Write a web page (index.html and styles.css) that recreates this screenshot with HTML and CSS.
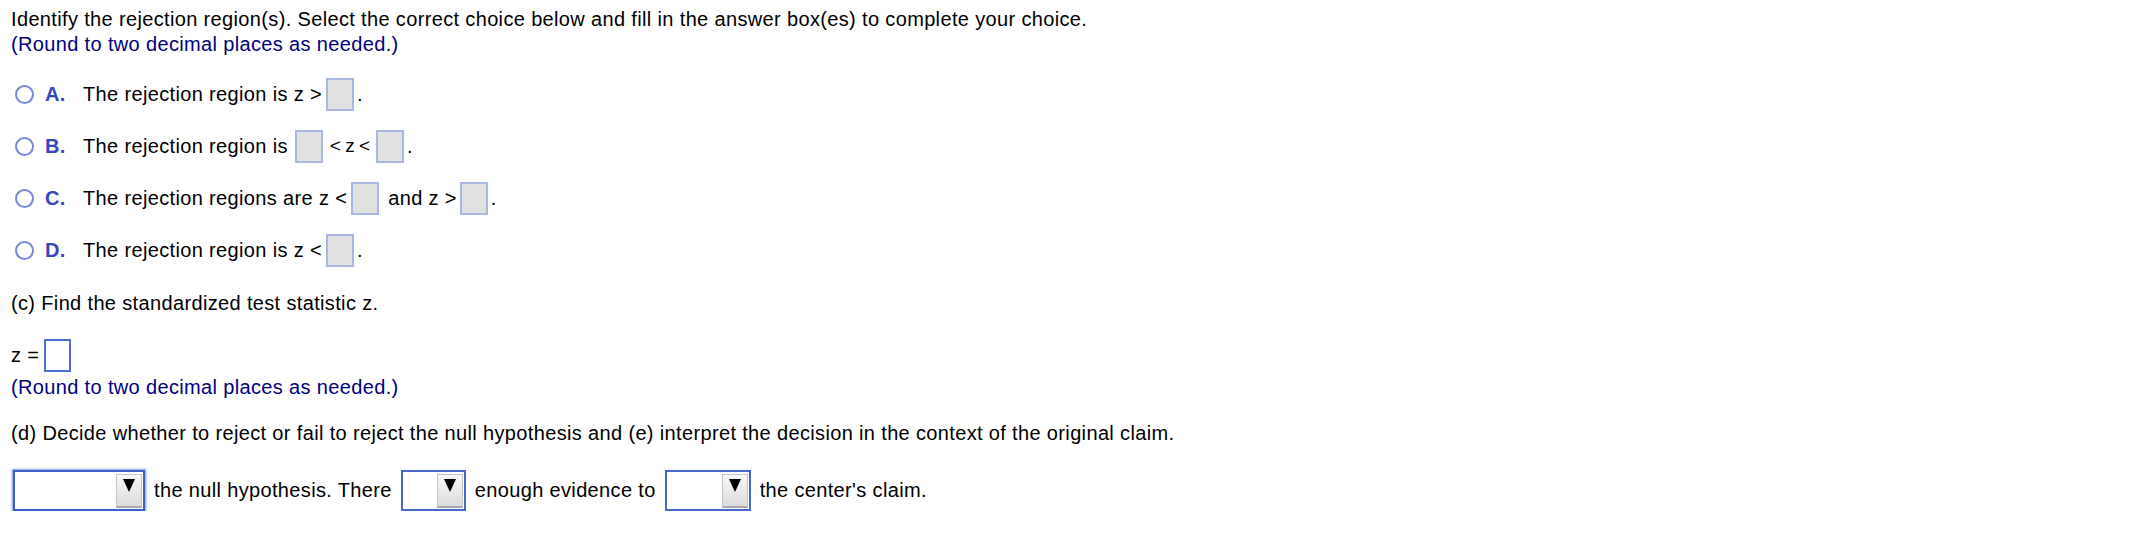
FILE: index.html
```html
<!DOCTYPE html>
<html>
<head>
<meta charset="utf-8">
<link rel="stylesheet" href="styles.css">
</head>
<body>
<div class="page">
  <p class="line">Identify the rejection region(s). Select the correct choice below and fill in the answer box(es) to complete your choice.</p>
  <p class="line hint">(Round to two decimal places as needed.)</p>

  <div class="choices">
    <div class="choice">
      <span class="radio"></span><span class="letter">A.</span>
      <span class="ctext">The rejection region is z &gt;</span><span class="box gap-l"></span><span class="dot">.</span>
    </div>
    <div class="choice">
      <span class="radio"></span><span class="letter">B.</span>
      <span class="ctext">The rejection region is</span><span class="box gap-l2"></span><span class="ineq">&lt; z &lt;</span><span class="box"></span><span class="dot">.</span>
    </div>
    <div class="choice">
      <span class="radio"></span><span class="letter">C.</span>
      <span class="ctext">The rejection regions are z &lt;</span><span class="box gap-l"></span><span class="ctext mid">and z &gt;</span><span class="box gap-m"></span><span class="dot">.</span>
    </div>
    <div class="choice">
      <span class="radio"></span><span class="letter">D.</span>
      <span class="ctext">The rejection region is z &lt;</span><span class="box gap-l"></span><span class="dot">.</span>
    </div>
  </div>

  <p class="line part-c">(c) Find the standardized test statistic z.</p>
  <div class="zrow"><span class="ctext">z =</span><span class="zbox"></span></div>
  <p class="line hint">(Round to two decimal places as needed.)</p>

  <p class="line part-d">(d) Decide whether to reject or fail to reject the null hypothesis and (e) interpret the decision in the context of the original claim.</p>
  <div class="ddrow">
    <span class="dd dd1 focus"><span class="ddbtn"><span class="tri"></span></span></span>
    <span class="ctext">the null hypothesis. There</span>
    <span class="dd dd2"><span class="ddbtn"><span class="tri"></span></span></span>
    <span class="ctext">enough evidence to</span>
    <span class="dd dd3"><span class="ddbtn"><span class="tri"></span></span></span>
    <span class="ctext">the center's claim.</span>
  </div>
</div>
</body>
</html>
```

FILE: styles.css
```css
html, body {
  margin: 0;
  padding: 0;
  background: #ffffff;
}
body {
  font-family: "Liberation Sans", Arial, Helvetica, sans-serif;
  font-size: 20px;
  letter-spacing: 0.35px;
  color: #000000;
}
.page {
  padding: 7px 0 0 11px;
}
.line {
  margin: 0;
  line-height: 25px;
  white-space: nowrap;
}
.hint {
  color: #000080;
}
.choices {
  margin-top: 20px;
  display: flex;
  flex-direction: column;
  gap: 18px;
}
.choice {
  display: flex;
  align-items: center;
  height: 34px;
}
.radio {
  width: 15px;
  height: 15px;
  border: 2px solid #7788d8;
  border-radius: 50%;
  margin-left: 4px;
  box-sizing: content-box;
}
.letter {
  color: #3447bd;
  font-weight: bold;
  margin-left: 11px;
  width: 38px;
}
.ctext {
  white-space: nowrap;
}
.box {
  display: inline-block;
  width: 24px;
  height: 29px;
  border: 2px solid #a7b6e3;
  background: #e1e1e1;
}
.gap-l { margin-left: 4px; }
.gap-l2 { margin-left: 7px; }
.gap-m { margin-left: 3px; }
.ineq {
  margin: 0 6px 0 7px;
  font-size: 19px;
  letter-spacing: 0;
  word-spacing: -1px;
}
.mid { margin: 0 0 0 9px; }
.dot { margin-left: 3px; }
.part-c {
  margin-top: 24px;
}
.zrow {
  margin-top: 23px;
  display: flex;
  align-items: center;
  height: 33px;
}
.zbox {
  display: inline-block;
  width: 23px;
  height: 29px;
  border: 2px solid #4a6fd1;
  background: #ffffff;
  margin-left: 5px;
}
.zrow + .hint {
  margin-top: 3px;
}
.part-d {
  margin-top: 21px;
}
.ddrow {
  margin-top: 24px;
  display: flex;
  align-items: center;
  height: 41px;
}
.dd {
  display: inline-flex;
  justify-content: flex-end;
  align-items: center;
  height: 37px;
  border: 2px solid #4568c9;
  background: #ffffff;
  padding-right: 1px;
  box-sizing: content-box;
}
.dd1 {
  width: 127px;
  margin-left: 2px;
  margin-right: 9px;
}
.dd1.focus {
  border-color: #3c5fc6;
  box-shadow: 0 0 2px 1px #7d95dc;
}
.dd2 {
  width: 60px;
  margin: 0 9px 0 9px;
}
.dd3 {
  width: 81px;
  margin: 0 9px 0 9px;
}
.ddbtn {
  display: flex;
  justify-content: center;
  align-items: flex-start;
  width: 24px;
  height: 31px;
  border: 1px solid #c4c4c4;
  border-bottom: 2px solid #a9a9a9;
  background: linear-gradient(#f8f8f8, #dcdcdc);
  box-sizing: content-box;
}
.tri {
  width: 0;
  height: 0;
  margin-top: 4px;
  border-left: 6px solid transparent;
  border-right: 6px solid transparent;
  border-top: 13px solid #000000;
}
```
